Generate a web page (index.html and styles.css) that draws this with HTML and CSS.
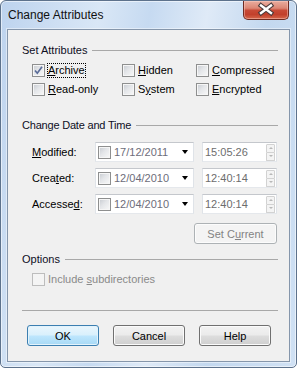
FILE: index.html
```html
<!DOCTYPE html>
<html>
<head>
<meta charset="utf-8">
<title>Change Attributes</title>
<link rel="stylesheet" href="styles.css">
</head>
<body>
<div class="window">
  <div class="titlebar">
    <span class="title">Change Attributes</span>
    <div class="close">
      <svg width="46" height="19" viewBox="0 0 46 19">
        <path d="M18 5.5 L28 13 M28 5.5 L18 13" stroke="#4a3a3a" stroke-width="4.6" fill="none" stroke-linecap="square"/>
        <path d="M18 5.5 L28 13 M28 5.5 L18 13" stroke="#ffffff" stroke-width="2.4" fill="none" stroke-linecap="square"/>
      </svg>
    </div>
  </div>
  <div class="client">
    <div class="ghead"><span>Set Attributes</span></div>
    <div class="attrs">
      <div class="cb"><span class="box"><svg width="11" height="11" viewBox="0 0 11 11"><path d="M2 5.5 L4.3 8.2 L9 1.8" stroke="#5a6c98" stroke-width="1.7" fill="none"/></svg></span><span class="focus"><u>A</u>rchive</span></div>
      <div class="cb"><span class="box"></span><span><u>H</u>idden</span></div>
      <div class="cb"><span class="box"></span><span><u>C</u>ompressed</span></div>
      <div class="cb"><span class="box"></span><span><u>R</u>ead-only</span></div>
      <div class="cb"><span class="box"></span><span>S<u>y</u>stem</span></div>
      <div class="cb"><span class="box"></span><span><u>E</u>ncrypted</span></div>
    </div>

    <div class="ghead gap-date"><span>Change Date and Time</span></div>
    <div class="drows">
      <div class="drow">
        <span class="dlabel"><u>M</u>odified:</span>
        <div class="dtp"><span class="box"></span><span class="dval">17/12/2011</span><span class="arrow"></span></div>
        <div class="time"><span class="tval">15:05:26</span><div class="spin"><span class="up"></span><span class="down"></span></div></div>
      </div>
      <div class="drow">
        <span class="dlabel">Crea<u>t</u>ed:</span>
        <div class="dtp"><span class="box"></span><span class="dval">12/04/2010</span><span class="arrow"></span></div>
        <div class="time"><span class="tval">12:40:14</span><div class="spin"><span class="up"></span><span class="down"></span></div></div>
      </div>
      <div class="drow">
        <span class="dlabel">Accesse<u>d</u>:</span>
        <div class="dtp"><span class="box"></span><span class="dval">12/04/2010</span><span class="arrow"></span></div>
        <div class="time"><span class="tval">12:40:14</span><div class="spin"><span class="up"></span><span class="down"></span></div></div>
      </div>
    </div>
    <div class="setrow"><button class="btn disabled setcur">Set C<u>u</u>rrent</button></div>

    <div class="ghead gap-opt"><span>Options</span></div>
    <div class="cb single disabled-cb"><span class="box"></span><span>Include <u>s</u>ubdirectories</span></div>

    <div class="sep"></div>
    <div class="btnrow">
      <button class="btn default">OK</button>
      <button class="btn">Cancel</button>
      <button class="btn">Help</button>
    </div>
  </div>
</div>
</body>
</html>
```
FILE: styles.css
```css
* { box-sizing: border-box; }
html, body { margin: 0; padding: 0; }
body {
  width: 297px;
  height: 368px;
  overflow: hidden;
  background: #ffffff;
  font-family: "Liberation Sans", Arial, sans-serif;
  font-size: 11px;
  color: #000;
}
.window {
  width: 297px;
  height: 368px;
  border: 1px solid #5d728c;
  border-radius: 6px 6px 5px 5px;
  background:
    linear-gradient(100deg, #bdd3ee 0%, #d9e7f6 28%, #c6daf1 42%, #dfeaf7 58%, #c3d8ef 75%, #d0e1f4 100%);
  box-shadow: inset 0 0 0 1px rgba(255,255,255,0.55);
  display: flex;
  flex-direction: column;
  padding: 0 6px 5px 6px;
}
.titlebar {
  height: 28px;
  display: flex;
  justify-content: space-between;
  align-items: flex-start;
}
.title {
  padding: 6px 0 0 1px;
  font-size: 12px;
  line-height: 16px;
  color: #111;
}
.close {
  width: 46px;
  height: 19px;
  margin-right: 1px;
  border: 1px solid #6e2b22;
  border-top: none;
  border-radius: 0 0 5px 5px;
  background: linear-gradient(#e9ad9f 0%, #dc8674 40%, #c84a36 52%, #c2402c 75%, #d5674b 100%);
  box-shadow: inset 0 0 0 1px rgba(255,210,200,0.45);
}
.close svg { display: block; margin-top: -1px; margin-left: -1px; }
.client {
  flex: 1;
  background: #f0f0f0;
  border: 1px solid #8596ab;
  box-shadow: 0 0 0 1px rgba(255,255,255,0.45);
  padding-top: 13px;
  display: flex;
  flex-direction: column;
}
.ghead {
  display: flex;
  align-items: center;
  height: 15px;
  line-height: 15px;
  padding: 0 11px 0 14px;
  gap: 5px;
  color: #0e0e1e;
}
.ghead::after {
  content: "";
  flex: 1;
  border-top: 1px solid #a8a8a8;
}
.gap-date { margin-top: 19px; letter-spacing: -0.2px; }
.gap-opt { margin-top: 8px; }
.attrs {
  margin-top: 3px;
  padding-left: 24px;
  display: grid;
  grid-template-columns: 90px 74px auto;
  grid-auto-rows: 19px;
}
.cb {
  display: flex;
  align-items: center;
  gap: 3px;
  white-space: nowrap;
  line-height: 13px;
}
.box {
  width: 13px;
  height: 13px;
  flex: none;
  border: 1px solid #8e8f8f;
  background: linear-gradient(135deg, #c6cad0 0%, #e4e6e9 45%, #f9f9f9 100%);
  box-shadow: inset 0 0 0 1px #f6f6f6;
  display: flex;
  align-items: center;
  justify-content: center;
}
.box svg { display: block; }
.focus {
  border: 1px dotted #000;
  margin-left: -1px;
  line-height: 13px;
}
.single {
  height: 19px;
  margin-top: 3px;
  padding-left: 24px;
}
.disabled-cb { color: #8a8a8a; }
.disabled-cb .box {
  border-color: #bdbdbd;
  background: #f4f4f4;
  box-shadow: none;
}
.drows {
  margin-top: 9px;
  display: flex;
  flex-direction: column;
  gap: 6px;
}
.drow {
  display: flex;
  align-items: center;
  height: 20px;
  padding-left: 24px;
}
.dlabel { width: 63px; }
.dtp, .time {
  height: 20px;
  background: #fff;
  border: 1px solid;
  border-color: #c4c7cc #dfe3e8 #e5e8ec #dfe3e8;
  display: flex;
  align-items: center;
}
.dtp {
  width: 99px;
  padding: 0 5px 0 2px;
}
.dval {
  margin-left: 3px;
  flex: 1;
  color: #6d6d7a;
}
.arrow {
  width: 0;
  height: 0;
  border-left: 3.5px solid transparent;
  border-right: 3.5px solid transparent;
  border-top: 4px solid #000;
}
.time {
  width: 75px;
  margin-left: 8px;
  padding: 0 1px 0 2px;
}
.tval { flex: 1; color: #6d6d6d; }
.spin {
  width: 9px;
  height: 17px;
  display: flex;
  flex-direction: column;
}
.spin span {
  flex: 1;
  border: 1px solid #d2d2d2;
  background: #f4f4f4;
  display: flex;
  align-items: center;
  justify-content: center;
}
.spin .up { border-radius: 1px 1px 0 0; }
.spin .down { border-top: none; border-radius: 0 0 1px 1px; }
.spin .up::after {
  content: "";
  border-left: 2px solid transparent;
  border-right: 2px solid transparent;
  border-bottom: 2px solid #b8b8b8;
}
.spin .down::after {
  content: "";
  border-left: 2px solid transparent;
  border-right: 2px solid transparent;
  border-top: 2px solid #b8b8b8;
}
.setrow {
  margin-top: 9px;
  display: flex;
  justify-content: flex-end;
  padding-right: 12px;
}
.btn {
  font-family: "Liberation Sans", Arial, sans-serif;
  font-size: 11px;
  color: #000;
  height: 21px;
  width: 72px;
  padding: 0;
  border: 1px solid #707070;
  border-radius: 3px;
  background: linear-gradient(#f2f2f2 0%, #ebebeb 48%, #dddddd 52%, #cfcfcf 100%);
  box-shadow: inset 0 0 0 1px #fbfbfb;
}
.btn.default {
  border-color: #3c7fb1;
  background: linear-gradient(#eaf6fd 0%, #d9f0fc 48%, #bee6fd 52%, #a7d9f5 100%);
  box-shadow: inset 0 0 0 1px #e2f3fc;
}
.btn.disabled {
  color: #838383;
  border-color: #adb2b5;
  background: #f4f4f4;
  box-shadow: inset 0 0 0 1px #fcfcfc;
}
.setcur { width: 83px; }
.sep {
  margin: 21px 11px 0 14px;
  border-top: 1px solid #a8a8a8;
}
.btnrow {
  margin-top: 14px;
  padding-left: 19px;
  display: flex;
  gap: 14px;
}
```
